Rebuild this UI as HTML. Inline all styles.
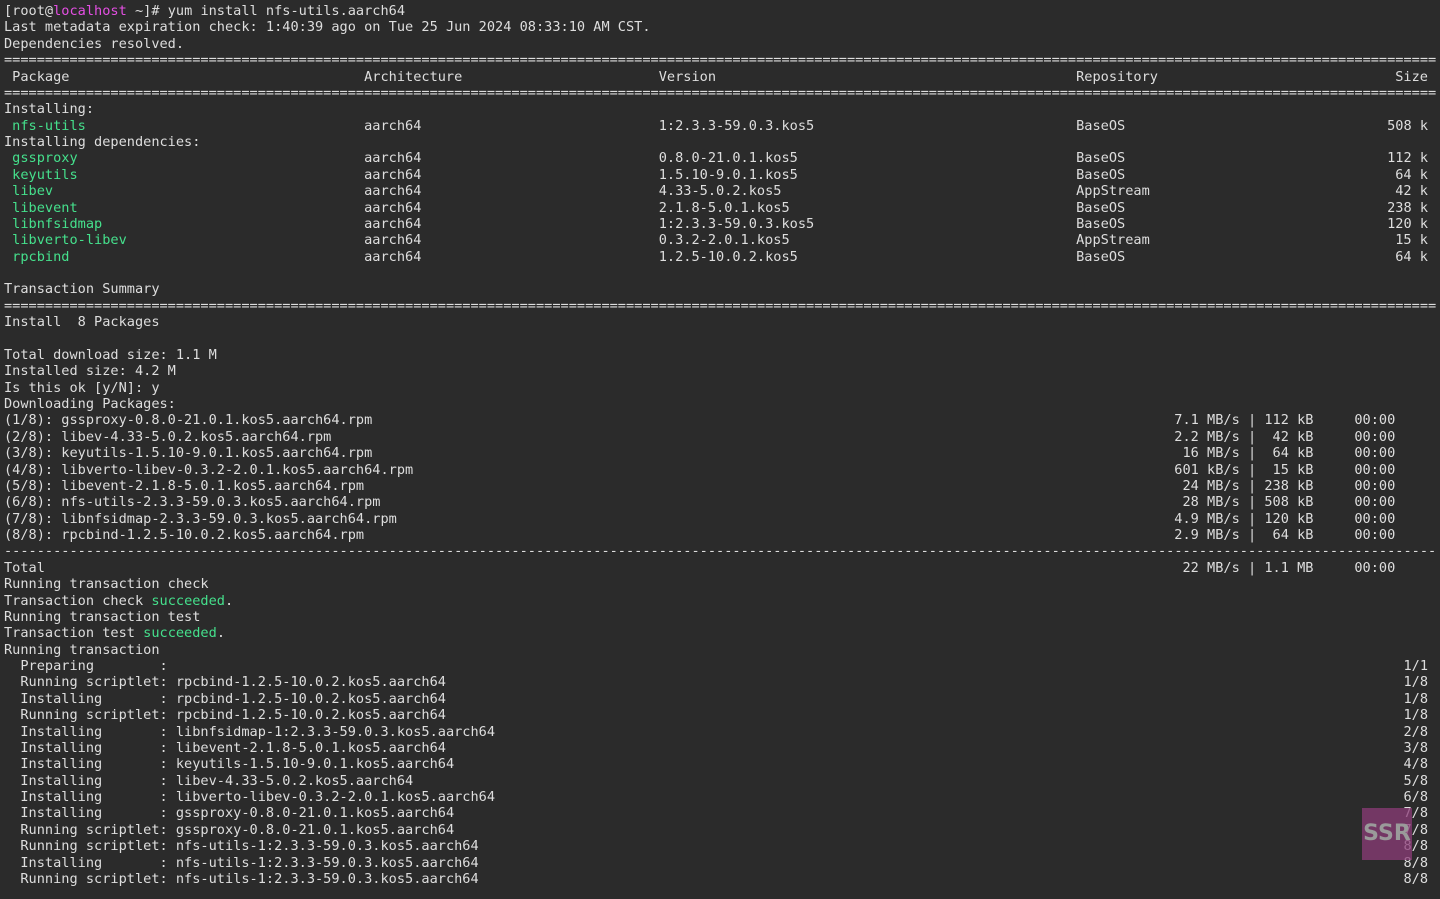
<!DOCTYPE html>
<html><head><meta charset="utf-8"><style>
html,body{margin:0;padding:0;background:#2b2b2b;width:1440px;height:899px;overflow:hidden}
#t{position:absolute;left:4px;top:3px;font-family:"DejaVu Sans Mono","Liberation Mono",monospace;font-size:13.6px;line-height:16.38px;color:#dedede;width:174ch}
.l{height:16.38px;white-space:pre}
.g{color:#45e08c}.m{color:#e44fe3}
.c{display:inline-block;white-space:pre;vertical-align:top}
.r{text-align:right}
.f{float:right}
#ssr{position:absolute;left:1362px;top:808px;width:50px;height:52px;background:rgba(140,60,120,0.75);color:#9a9a9a;font:bold 22px "DejaVu Sans",sans-serif;line-height:52px;text-align:center}
</style></head><body>
<div id="t"><div class="l">[root@<span class="m">localhost</span> ~]# yum install nfs-utils.aarch64</div><div class="l">Last metadata expiration check: 1:40:39 ago on Tue 25 Jun 2024 08:33:10 AM CST.</div><div class="l">Dependencies resolved.</div><div class="l">===============================================================================================================================================================================</div><div class="l"><span class="c" style="width:44ch"> Package</span><span class="c" style="width:36ch">Architecture</span><span class="c" style="width:51ch">Version</span><span class="c" style="width:30ch">Repository</span><span class="c r" style="width:13ch">Size</span></div><div class="l">===============================================================================================================================================================================</div><div class="l">Installing:</div><div class="l"><span class="c g" style="width:44ch"> nfs-utils</span><span class="c" style="width:36ch">aarch64</span><span class="c" style="width:51ch">1:2.3.3-59.0.3.kos5</span><span class="c" style="width:30ch">BaseOS</span><span class="c r" style="width:13ch">508 k</span></div><div class="l">Installing dependencies:</div><div class="l"><span class="c g" style="width:44ch"> gssproxy</span><span class="c" style="width:36ch">aarch64</span><span class="c" style="width:51ch">0.8.0-21.0.1.kos5</span><span class="c" style="width:30ch">BaseOS</span><span class="c r" style="width:13ch">112 k</span></div><div class="l"><span class="c g" style="width:44ch"> keyutils</span><span class="c" style="width:36ch">aarch64</span><span class="c" style="width:51ch">1.5.10-9.0.1.kos5</span><span class="c" style="width:30ch">BaseOS</span><span class="c r" style="width:13ch">64 k</span></div><div class="l"><span class="c g" style="width:44ch"> libev</span><span class="c" style="width:36ch">aarch64</span><span class="c" style="width:51ch">4.33-5.0.2.kos5</span><span class="c" style="width:30ch">AppStream</span><span class="c r" style="width:13ch">42 k</span></div><div class="l"><span class="c g" style="width:44ch"> libevent</span><span class="c" style="width:36ch">aarch64</span><span class="c" style="width:51ch">2.1.8-5.0.1.kos5</span><span class="c" style="width:30ch">BaseOS</span><span class="c r" style="width:13ch">238 k</span></div><div class="l"><span class="c g" style="width:44ch"> libnfsidmap</span><span class="c" style="width:36ch">aarch64</span><span class="c" style="width:51ch">1:2.3.3-59.0.3.kos5</span><span class="c" style="width:30ch">BaseOS</span><span class="c r" style="width:13ch">120 k</span></div><div class="l"><span class="c g" style="width:44ch"> libverto-libev</span><span class="c" style="width:36ch">aarch64</span><span class="c" style="width:51ch">0.3.2-2.0.1.kos5</span><span class="c" style="width:30ch">AppStream</span><span class="c r" style="width:13ch">15 k</span></div><div class="l"><span class="c g" style="width:44ch"> rpcbind</span><span class="c" style="width:36ch">aarch64</span><span class="c" style="width:51ch">1.2.5-10.0.2.kos5</span><span class="c" style="width:30ch">BaseOS</span><span class="c r" style="width:13ch">64 k</span></div><div class="l"> </div><div class="l">Transaction Summary</div><div class="l">===============================================================================================================================================================================</div><div class="l">Install  8 Packages</div><div class="l"> </div><div class="l">Total download size: 1.1 M</div><div class="l">Installed size: 4.2 M</div><div class="l">Is this ok [y/N]: y</div><div class="l">Downloading Packages:</div><div class="l"><span class="c" style="width:135ch">(1/8): gssproxy-0.8.0-21.0.1.kos5.aarch64.rpm</span><span class="c r" style="width:16ch">7.1 MB/s</span> | <span class="c r" style="width:6ch">112 kB</span>     00:00</div><div class="l"><span class="c" style="width:135ch">(2/8): libev-4.33-5.0.2.kos5.aarch64.rpm</span><span class="c r" style="width:16ch">2.2 MB/s</span> | <span class="c r" style="width:6ch">42 kB</span>     00:00</div><div class="l"><span class="c" style="width:135ch">(3/8): keyutils-1.5.10-9.0.1.kos5.aarch64.rpm</span><span class="c r" style="width:16ch">16 MB/s</span> | <span class="c r" style="width:6ch">64 kB</span>     00:00</div><div class="l"><span class="c" style="width:135ch">(4/8): libverto-libev-0.3.2-2.0.1.kos5.aarch64.rpm</span><span class="c r" style="width:16ch">601 kB/s</span> | <span class="c r" style="width:6ch">15 kB</span>     00:00</div><div class="l"><span class="c" style="width:135ch">(5/8): libevent-2.1.8-5.0.1.kos5.aarch64.rpm</span><span class="c r" style="width:16ch">24 MB/s</span> | <span class="c r" style="width:6ch">238 kB</span>     00:00</div><div class="l"><span class="c" style="width:135ch">(6/8): nfs-utils-2.3.3-59.0.3.kos5.aarch64.rpm</span><span class="c r" style="width:16ch">28 MB/s</span> | <span class="c r" style="width:6ch">508 kB</span>     00:00</div><div class="l"><span class="c" style="width:135ch">(7/8): libnfsidmap-2.3.3-59.0.3.kos5.aarch64.rpm</span><span class="c r" style="width:16ch">4.9 MB/s</span> | <span class="c r" style="width:6ch">120 kB</span>     00:00</div><div class="l"><span class="c" style="width:135ch">(8/8): rpcbind-1.2.5-10.0.2.kos5.aarch64.rpm</span><span class="c r" style="width:16ch">2.9 MB/s</span> | <span class="c r" style="width:6ch">64 kB</span>     00:00</div><div class="l">-------------------------------------------------------------------------------------------------------------------------------------------------------------------------------</div><div class="l"><span class="c" style="width:135ch">Total</span><span class="c r" style="width:16ch">22 MB/s</span> | <span class="c r" style="width:6ch">1.1 MB</span>     00:00</div><div class="l">Running transaction check</div><div class="l">Transaction check <span class="g">succeeded</span>.</div><div class="l">Running transaction test</div><div class="l">Transaction test <span class="g">succeeded</span>.</div><div class="l">Running transaction</div><div class="l">  Preparing        :<span class="f">1/1</span></div><div class="l">  Running scriptlet: rpcbind-1.2.5-10.0.2.kos5.aarch64<span class="f">1/8</span></div><div class="l">  Installing       : rpcbind-1.2.5-10.0.2.kos5.aarch64<span class="f">1/8</span></div><div class="l">  Running scriptlet: rpcbind-1.2.5-10.0.2.kos5.aarch64<span class="f">1/8</span></div><div class="l">  Installing       : libnfsidmap-1:2.3.3-59.0.3.kos5.aarch64<span class="f">2/8</span></div><div class="l">  Installing       : libevent-2.1.8-5.0.1.kos5.aarch64<span class="f">3/8</span></div><div class="l">  Installing       : keyutils-1.5.10-9.0.1.kos5.aarch64<span class="f">4/8</span></div><div class="l">  Installing       : libev-4.33-5.0.2.kos5.aarch64<span class="f">5/8</span></div><div class="l">  Installing       : libverto-libev-0.3.2-2.0.1.kos5.aarch64<span class="f">6/8</span></div><div class="l">  Installing       : gssproxy-0.8.0-21.0.1.kos5.aarch64<span class="f">7/8</span></div><div class="l">  Running scriptlet: gssproxy-0.8.0-21.0.1.kos5.aarch64<span class="f">7/8</span></div><div class="l">  Running scriptlet: nfs-utils-1:2.3.3-59.0.3.kos5.aarch64<span class="f">8/8</span></div><div class="l">  Installing       : nfs-utils-1:2.3.3-59.0.3.kos5.aarch64<span class="f">8/8</span></div><div class="l">  Running scriptlet: nfs-utils-1:2.3.3-59.0.3.kos5.aarch64<span class="f">8/8</span></div></div>
<div id="ssr">SSR</div>
</body></html>
